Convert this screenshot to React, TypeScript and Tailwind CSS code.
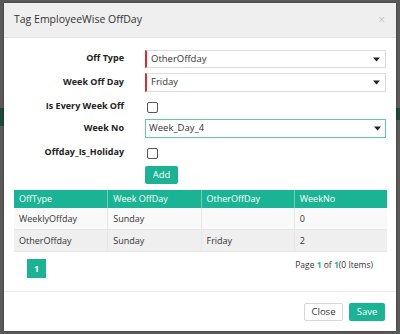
import React from "react";

const Caret = () => (
  <svg width="7" height="5" viewBox="0 0 7 5" className="shrink-0">
    <path d="M0 0.5 L7 0.5 L3.5 4.5 Z" fill="#222" />
  </svg>
);

function RedSelect({ value }: { value: string }) {
  return (
    <div className="ml-[21px] w-[241px] h-full flex items-center justify-between pl-[4px] pr-[5px] bg-white text-[9.5px] text-[#333] border border-[#dcdcdc] border-l-2 border-l-[#e5262b]">
      <span>{value}</span>
      <Caret />
    </div>
  );
}

function Label({ children }: { children: React.ReactNode }) {
  return (
    <div className="w-[120px] text-right font-bold text-[9px] text-[#222] mb-[3px] leading-none">{children}</div>
  );
}

function Checkbox() {
  return <div className="ml-[23px] w-[11px] h-[11px] border border-[#555] rounded-[2px] bg-white" />;
}

export default function App() {
  const rows = [
    ["WeeklyOffday", "Sunday", "", "0"],
    ["OtherOffday", "Sunday", "Friday", "2"],
  ];
  return (
    <div className="relative w-[400px] h-[334px] bg-[#5b5b5b] overflow-hidden font-['Open_Sans',sans-serif] pl-[4px] pt-[3px]">
      <div className="absolute left-0 top-[108px] w-[4px] h-[18px] bg-[#1d4a3a]" />
      <div className="absolute right-0 top-[108px] w-[4px] h-[12px] bg-[#1d4a3a]" />
      <div className="relative w-[392px] h-[328px] bg-white flex flex-col shadow-[0_0_2px_rgba(0,0,0,0.5)]">
        <div className="h-[35px] shrink-0 bg-[#efefef] border-b border-[#e3e3e3] flex items-center justify-between pl-[10px] pr-[11px]">
          <span className="text-[10.5px] text-[#333]">Tag EmployeeWise OffDay</span>
          <span className="text-[12px] text-[#c4c4c4] leading-none">×</span>
        </div>

        <div className="flex items-center h-[18px] mt-[12px]">
          <Label>Off Type</Label>
          <RedSelect value="OtherOffday" />
        </div>
        <div className="flex items-center h-[19px] mt-[5px]">
          <Label>Week Off Day</Label>
          <RedSelect value="Friday" />
        </div>
        <div className="flex items-center h-[20px] mt-[5px]">
          <Label>Is Every Week Off</Label>
          <Checkbox />
        </div>
        <div className="flex items-center h-[19px] mt-[2px]">
          <Label>Week No</Label>
          <div className="ml-[22px] w-[239px] h-[17px] flex items-center justify-between pl-[3px] pr-[4px] bg-white text-[9.5px] text-[#333] ring-1 ring-[#5fc9a9] shadow-[0_1px_3px_rgba(0,0,0,0.1)]">
            <span>Week_Day_4</span>
            <Caret />
          </div>
        </div>
        <div className="flex items-center h-[20px] mt-[5px]">
          <Label>Offday_Is_Holiday</Label>
          <Checkbox />
        </div>
        <div className="flex mt-[3px]">
          <div className="ml-[141px] w-[33px] h-[18px] bg-[#1ab394] rounded-[2px] text-white text-[9.5px] flex items-center justify-center">
            Add
          </div>
        </div>

        <div className="mt-[6px] ml-[10px] w-[373px] text-[9px]">
          <div className="grid grid-cols-4 h-[18px] bg-[#1ab394] text-white">
            {["OffType", "Week OffDay", "OtherOffDay", "WeekNo"].map((h, i) => (
              <div key={h} className={"flex items-center pl-[5px] " + (i > 0 ? "border-l border-[#6fd0b9]" : "")}>
                {h}
              </div>
            ))}
          </div>
          {rows.map((r, ri) => (
            <div
              key={ri}
              className={
                "grid grid-cols-4 h-[22px] text-[#333] border-b border-[#e6e6e6] " +
                (ri === 0 ? "bg-[#f9f9f9]" : "bg-[#efefef]")
              }
            >
              {r.map((c, i) => (
                <div key={i} className={"flex items-center pl-[5px] " + (i > 0 ? "border-l border-[#e6e6e6]" : "")}>
                  {c}
                </div>
              ))}
            </div>
          ))}
        </div>

        <div className="flex items-center justify-between mt-[7px] ml-[23px] mr-[23px]">
          <div className="w-[19px] h-[19px] bg-[#1ab394] text-white text-[9px] font-bold flex items-center justify-center">
            1
          </div>
          <div className="text-[8.5px] text-[#333] mb-[6px]">
            Page <span className="text-[#1ab394] font-bold">1</span> of{" "}
            <span className="text-[#1ab394] font-bold">1</span>(0 Items)
          </div>
        </div>

        <div className="mt-[13px] border-t border-[#ececec] flex justify-end gap-[6px] pt-[11px] pr-[11px]">
          <div className="w-[39px] h-[18px] border border-[#d6d6d6] bg-white text-[9.5px] text-[#333] flex items-center justify-center rounded-[2px]">
            Close
          </div>
          <div className="w-[36px] h-[18px] bg-[#1ab394] text-white text-[9.5px] flex items-center justify-center rounded-[2px]">
            Save
          </div>
        </div>
      </div>
    </div>
  );
}
